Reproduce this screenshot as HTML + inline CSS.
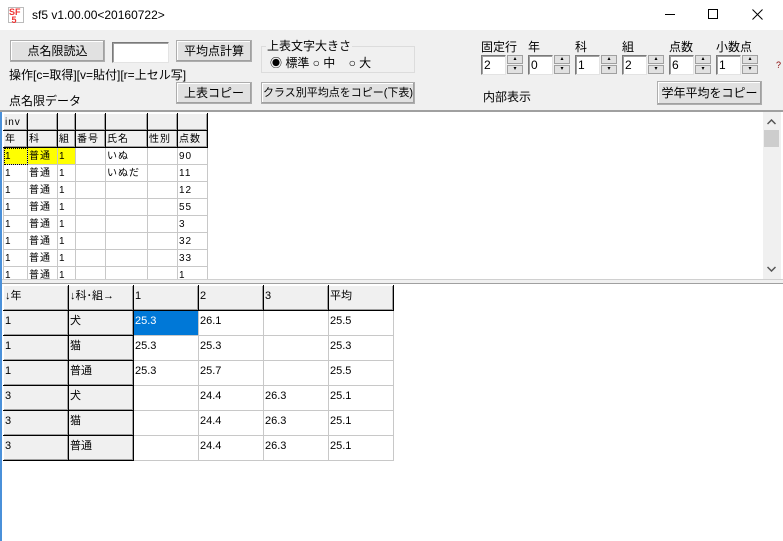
<!DOCTYPE html><html><head><meta charset="utf-8"><style>
*{box-sizing:border-box;margin:0;padding:0}
body{width:783px;height:541px;position:relative;overflow:hidden;background:#f0f0f0;font-family:"Liberation Sans","Noto Sans CJK JP",sans-serif;font-size:12px;color:#000}
.a{position:absolute}
.btn{position:absolute;background:#e1e1e1;border:1px solid #adadad;box-shadow:inset -1px -1px #a0a0a0,inset 1px 1px #fff;text-align:center;font-size:12px;line-height:20px}
.tb{position:absolute;background:#fff;border:1px solid #7a7a7a;border-right-color:#e3e3e3;border-bottom-color:#e3e3e3;box-shadow:inset 1px 1px #a0a0a0;font-size:12px;padding:2px 2px;line-height:14px}
.sp{position:absolute;width:16px;height:19px}
.sp div{height:9px;background:#e1e1e1;border:1px solid #a0a0a0;margin-bottom:1px;font-size:6px;line-height:7px;text-align:center}
table{border-collapse:collapse;position:absolute;table-layout:fixed}
td{border:1px solid #c8c8c8;padding:0 1px;white-space:nowrap;overflow:hidden}
.g td{height:17px;font-size:10px;letter-spacing:1px;line-height:15px;vertical-align:middle}
.h{background:#f0f0f0;border:1px solid #000;border-left-color:#fff;border-top-color:#fff;box-shadow:inset -1px -1px #a0a0a0}
.b td{height:25px;font-size:11px;vertical-align:top;padding-top:2px;line-height:16px}
</style></head><body>
<div class="a" style="left:0;top:0;width:783px;height:30px;background:#fff"></div>
<div class="a" style="left:8px;top:7px;width:16px;height:16px;background:#fff;border:1px solid #bbb;color:#e33;font-weight:bold;font-size:9px;line-height:8px">SF<br>&nbsp;5</div>
<div class="a" style="left:32px;top:8px;font-size:12px">sf5 v1.00.00&lt;20160722&gt;</div>
<div class="a" style="left:665px;top:14px;width:10px;height:1px;background:#000"></div>
<div class="a" style="left:708px;top:9px;width:10px;height:10px;border:1px solid #000"></div>
<svg class="a" style="left:752px;top:9px" width="11" height="11"><path d="M0.5 0.5L10.5 10.5M10.5 0.5L0.5 10.5" stroke="#000" stroke-width="1"/></svg>

<div class="btn" style="left:10px;top:40px;width:95px;height:22px">点名限読込</div>
<div class="tb" style="left:112px;top:42px;width:57px;height:21px"></div>
<div class="btn" style="left:176px;top:40px;width:76px;height:22px">平均点計算</div>
<div class="a" style="left:261px;top:46px;width:154px;height:27px;border:1px solid #dcdcdc"></div>
<div class="a" style="left:266px;top:37px;background:#f0f0f0;padding:0 1px">上表文字大きさ</div>
<div class="a" style="left:270px;top:54px">◉ 標準 ○ 中 &nbsp;&nbsp;&nbsp;○ 大</div>
<div class="a" style="left:9px;top:66px">操作[c=取得][v=貼付][r=上セル写]</div>
<div class="a" style="left:9px;top:92px">点名限データ</div>
<div class="btn" style="left:176px;top:82px;width:76px;height:22px">上表コピー</div>
<div class="btn" style="left:261px;top:82px;width:154px;height:22px;font-size:11px">クラス別平均点をコピー(下表)</div>

<div class="a" style="left:481px;top:38px">固定行</div><div class="a" style="left:528px;top:38px">年</div><div class="a" style="left:575px;top:38px">科</div><div class="a" style="left:622px;top:38px">組</div><div class="a" style="left:669px;top:38px">点数</div><div class="a" style="left:716px;top:38px">小数点</div>
<div class="tb" style="left:481px;top:55px;width:25px;height:20px">2</div><div class="sp" style="left:507px;top:55px"><div>▴</div><div>▾</div></div>
<div class="tb" style="left:528px;top:55px;width:25px;height:20px">0</div><div class="sp" style="left:554px;top:55px"><div>▴</div><div>▾</div></div>
<div class="tb" style="left:575px;top:55px;width:25px;height:20px">1</div><div class="sp" style="left:601px;top:55px"><div>▴</div><div>▾</div></div>
<div class="tb" style="left:622px;top:55px;width:25px;height:20px">2</div><div class="sp" style="left:648px;top:55px"><div>▴</div><div>▾</div></div>
<div class="tb" style="left:669px;top:55px;width:25px;height:20px">6</div><div class="sp" style="left:695px;top:55px"><div>▴</div><div>▾</div></div>
<div class="tb" style="left:716px;top:55px;width:25px;height:20px">1</div><div class="sp" style="left:742px;top:55px"><div>▴</div><div>▾</div></div>
<div class="a" style="left:776px;top:60px;font-size:9px;color:#800">?</div>
<div class="a" style="left:483px;top:88px">内部表示</div>
<div class="btn" style="left:657px;top:81px;width:105px;height:24px;line-height:22px">学年平均をコピー</div>

<div class="a" style="left:0;top:110px;width:783px;height:3px;background:#a0a0a0"></div>
<div class="a" style="left:0;top:112px;width:783px;height:167px;background:#fff"></div>
<div class="a" style="left:763px;top:112px;width:18px;height:167px;background:#f0f0f0"></div>
<div class="a" style="left:764px;top:130px;width:15px;height:17px;background:#cdcdcd"></div>
<svg class="a" style="left:767px;top:119px" width="9" height="6"><path d="M0.5 5L4.5 1L8.5 5" stroke="#555" stroke-width="1.5" fill="none"/></svg>
<svg class="a" style="left:767px;top:266px" width="9" height="6"><path d="M0.5 1L4.5 5L8.5 1" stroke="#555" stroke-width="1.5" fill="none"/></svg>
<table class="g" style="left:3px;top:113px">
<tr><td class="h" style="width:24px">inv</td><td class="h" style="width:30px"></td><td class="h" style="width:18px"></td><td class="h" style="width:30px"></td><td class="h" style="width:42px"></td><td class="h" style="width:30px"></td><td class="h" style="width:30px"></td></tr>
<tr><td class="h">年</td><td class="h">科</td><td class="h">組</td><td class="h">番号</td><td class="h">氏名</td><td class="h">性別</td><td class="h">点数</td></tr>
<tr><td style="background:#ff0;outline:1px dotted #000;outline-offset:-1px">1</td><td style="background:#ff0">普通</td><td style="background:#ff0">1</td><td></td><td>いぬ</td><td></td><td>90</td></tr>
<tr><td>1</td><td>普通</td><td>1</td><td></td><td>いぬだ</td><td></td><td>11</td></tr>
<tr><td>1</td><td>普通</td><td>1</td><td></td><td></td><td></td><td>12</td></tr>
<tr><td>1</td><td>普通</td><td>1</td><td></td><td></td><td></td><td>55</td></tr>
<tr><td>1</td><td>普通</td><td>1</td><td></td><td></td><td></td><td>3</td></tr>
<tr><td>1</td><td>普通</td><td>1</td><td></td><td></td><td></td><td>32</td></tr>
<tr><td>1</td><td>普通</td><td>1</td><td></td><td></td><td></td><td>33</td></tr>
<tr><td>1</td><td>普通</td><td>1</td><td></td><td></td><td></td><td>1</td></tr>
</table>
<div class="a" style="left:0;top:279px;width:783px;height:4px;background:#f0f0f0;border-top:1px solid #d0d0d0"></div>
<div class="a" style="left:0;top:283px;width:783px;height:258px;background:#fff;border-top:1px solid #a0a0a0"></div>
<div class="a" style="left:0;top:112px;width:2px;height:429px;background:#4a90d9"></div>
<table class="b" style="left:3px;top:285px">
<tr><td class="h" style="width:65px">↓年</td><td class="h" style="width:65px">↓科･組→</td><td class="h" style="width:65px">1</td><td class="h" style="width:65px">2</td><td class="h" style="width:65px">3</td><td class="h" style="width:65px">平均</td></tr>
<tr><td class="h">1</td><td class="h">犬</td><td style="background:#0078d7;color:#fff">25.3</td><td>26.1</td><td></td><td>25.5</td></tr>
<tr><td class="h">1</td><td class="h">猫</td><td>25.3</td><td>25.3</td><td></td><td>25.3</td></tr>
<tr><td class="h">1</td><td class="h">普通</td><td>25.3</td><td>25.7</td><td></td><td>25.5</td></tr>
<tr><td class="h">3</td><td class="h">犬</td><td></td><td>24.4</td><td>26.3</td><td>25.1</td></tr>
<tr><td class="h">3</td><td class="h">猫</td><td></td><td>24.4</td><td>26.3</td><td>25.1</td></tr>
<tr><td class="h">3</td><td class="h">普通</td><td></td><td>24.4</td><td>26.3</td><td>25.1</td></tr>
</table>
</body></html>
